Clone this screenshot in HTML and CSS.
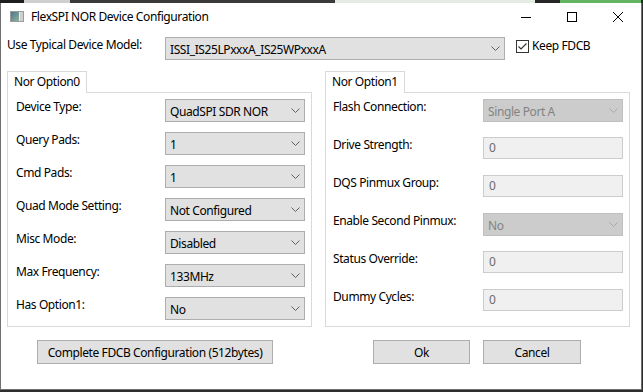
FILE: index.html
```html
<!DOCTYPE html>
<html>
<head>
<meta charset="utf-8">
<link rel="stylesheet" href="styles.css">
</head>
<body>
<div class="desk-strip"></div>
<div class="window">
  <div class="titlebar">
    <svg class="app-icon" width="14" height="11" viewBox="0 0 14 11">
      <defs>
        <linearGradient id="ig" x1="0" y1="0" x2="1" y2="1">
          <stop offset="0" stop-color="#4f7590"/>
          <stop offset="1" stop-color="#8cb39a"/>
        </linearGradient>
      </defs>
      <rect x="0.5" y="0.5" width="13" height="10" fill="#eeeeee" stroke="#9c9c9c"/>
      <rect x="1" y="1" width="8" height="9" fill="url(#ig)"/>
      <rect x="10" y="1" width="3" height="9" fill="#cfcfcf"/>
    </svg>
    <span class="title">FlexSPI NOR Device Configuration</span>
    <div class="cap-btn">
      <svg width="10" height="10" viewBox="0 0 10 10"><path d="M0 5.5H10" stroke="#000" stroke-width="1"/></svg>
    </div>
    <div class="cap-btn">
      <svg width="10" height="10" viewBox="0 0 10 10"><rect x="0.5" y="0.5" width="9" height="9" fill="none" stroke="#000"/></svg>
    </div>
    <div class="cap-btn">
      <svg width="10" height="10" viewBox="0 0 10 10"><path d="M0 0L10 10M10 0L0 10" stroke="#000" stroke-width="1"/></svg>
    </div>
  </div>

  <div class="client">
    <div class="model-row">
      <span class="model-label">Use Typical Device Model:</span>
      <div class="combo wide"><span class="combo-text">ISSI_IS25LPxxxA_IS25WPxxxA</span><svg class="chev" width="9" height="5" viewBox="0 0 9 5"><path d="M0.5 0.5L4.5 4.5L8.5 0.5" fill="none" stroke="#606060"/></svg></div>
      <label class="keep">
        <svg width="13" height="13" viewBox="0 0 13 13"><rect x="0.5" y="0.5" width="12" height="12" fill="#fff" stroke="#333"/><path d="M2.5 6.5L5 9L10.5 3.5" fill="none" stroke="#333" stroke-width="1.2"/></svg>
        <span>Keep FDCB</span>
      </label>
    </div>

    <div class="groups">
      <div class="tabgroup">
        <div class="tab">Nor Option0</div>
        <div class="pane pane-left">
          <div class="row"><span class="lbl">Device Type:</span><div class="combo"><span class="combo-text">QuadSPI SDR NOR</span><svg class="chev" width="9" height="5" viewBox="0 0 9 5"><path d="M0.5 0.5L4.5 4.5L8.5 0.5" fill="none" stroke="#606060"/></svg></div></div>
          <div class="row"><span class="lbl">Query Pads:</span><div class="combo"><span class="combo-text">1</span><svg class="chev" width="9" height="5" viewBox="0 0 9 5"><path d="M0.5 0.5L4.5 4.5L8.5 0.5" fill="none" stroke="#606060"/></svg></div></div>
          <div class="row"><span class="lbl">Cmd Pads:</span><div class="combo"><span class="combo-text">1</span><svg class="chev" width="9" height="5" viewBox="0 0 9 5"><path d="M0.5 0.5L4.5 4.5L8.5 0.5" fill="none" stroke="#606060"/></svg></div></div>
          <div class="row"><span class="lbl">Quad Mode Setting:</span><div class="combo"><span class="combo-text">Not Configured</span><svg class="chev" width="9" height="5" viewBox="0 0 9 5"><path d="M0.5 0.5L4.5 4.5L8.5 0.5" fill="none" stroke="#606060"/></svg></div></div>
          <div class="row"><span class="lbl">Misc Mode:</span><div class="combo"><span class="combo-text">Disabled</span><svg class="chev" width="9" height="5" viewBox="0 0 9 5"><path d="M0.5 0.5L4.5 4.5L8.5 0.5" fill="none" stroke="#606060"/></svg></div></div>
          <div class="row"><span class="lbl">Max Frequency:</span><div class="combo"><span class="combo-text">133MHz</span><svg class="chev" width="9" height="5" viewBox="0 0 9 5"><path d="M0.5 0.5L4.5 4.5L8.5 0.5" fill="none" stroke="#606060"/></svg></div></div>
          <div class="row"><span class="lbl">Has Option1:</span><div class="combo"><span class="combo-text">No</span><svg class="chev" width="9" height="5" viewBox="0 0 9 5"><path d="M0.5 0.5L4.5 4.5L8.5 0.5" fill="none" stroke="#606060"/></svg></div></div>
        </div>
      </div>

      <div class="tabgroup">
        <div class="tab">Nor Option1</div>
        <div class="pane pane-right">
          <div class="row"><span class="lbl">Flash Connection:</span><div class="combo disabled"><span class="combo-text">Single Port A</span><svg class="chev" width="9" height="5" viewBox="0 0 9 5"><path d="M0.5 0.5L4.5 4.5L8.5 0.5" fill="none" stroke="#a8a8a8"/></svg></div></div>
          <div class="row"><span class="lbl">Drive Strength:</span><div class="textbox">0</div></div>
          <div class="row"><span class="lbl">DQS Pinmux Group:</span><div class="textbox">0</div></div>
          <div class="row"><span class="lbl">Enable Second Pinmux:</span><div class="combo disabled"><span class="combo-text">No</span><svg class="chev" width="9" height="5" viewBox="0 0 9 5"><path d="M0.5 0.5L4.5 4.5L8.5 0.5" fill="none" stroke="#a8a8a8"/></svg></div></div>
          <div class="row"><span class="lbl">Status Override:</span><div class="textbox">0</div></div>
          <div class="row"><span class="lbl">Dummy Cycles:</span><div class="textbox">0</div></div>
        </div>
      </div>
    </div>

    <div class="buttons">
      <button class="btn btn-complete">Complete FDCB Configuration (512bytes)</button>
      <button class="btn btn-ok">Ok</button>
      <button class="btn btn-cancel">Cancel</button>
    </div>
  </div>
</div>
</body>
</html>
```

FILE: styles.css
```css
* { box-sizing: border-box; }
html, body { margin: 0; padding: 0; }
body {
  width: 643px;
  height: 392px;
  overflow: hidden;
  background: #2e2e2e;
  font-family: "Noto Sans", "Open Sans", sans-serif;
  font-size: 12px;
  letter-spacing: -0.4px;
  color: #000;
}
.desk-strip {
  height: 3px;
  background: linear-gradient(to right, #1e1e1e 0 24px, #cfcfcf 24px 70px, #3a3a3a 70px 335px, #e4ece4 335px 535px, #262626 535px 560px, #63b463 560px 641px, #262626 641px);
}
.window {
  width: 642px;
  height: 387px;
  background: #fff;
  border: 1px solid #6f6f6f;
  border-top: 0;
  display: flex;
  flex-direction: column;
}
.titlebar {
  height: 27px;
  display: flex;
  align-items: center;
  padding-left: 9px;
}
.app-icon { flex: none; }
.title {
  flex: 1;
  margin-left: 7px;
  line-height: 16px;
  padding-top: 1px;
}
.cap-btn {
  width: 46px;
  height: 27px;
  display: flex;
  align-items: center;
  justify-content: center;
}
.client {
  padding: 7px 0 0 6px;
}
.model-row {
  display: flex;
  align-items: flex-start;
  height: 23px;
}
.model-label {
  width: 158px;
  line-height: 16px;
}
.combo {
  width: 140px;
  height: 23px;
  background: #e1e1e1;
  border: 1px solid #adadad;
  display: flex;
  align-items: center;
  padding: 2px 4px 0 4px;
  flex: none;
}
.combo.wide { width: 340px; }
.combo-text {
  flex: 1;
  white-space: nowrap;
  overflow: hidden;
}
.chev { flex: none; margin-top: -2px; }
.combo.disabled {
  background: #cccccc;
  border-color: #bfbfbf;
  color: #838383;
}
.keep {
  margin-left: 11px;
  margin-top: 2px;
  display: flex;
  align-items: center;
  gap: 3px;
  line-height: 14px;
}
.groups {
  margin-top: 11px;
  display: flex;
  gap: 13px;
  align-items: stretch;
}
.tabgroup {
  width: 305px;
  display: flex;
  flex-direction: column;
}
.tab {
  align-self: flex-start;
  height: 22px;
  padding: 0 6px;
  border: 1px solid #d9d9d9;
  border-bottom: 0;
  background: #fff;
  line-height: 20px;
  position: relative;
  z-index: 1;
  margin-bottom: -1px;
}
.pane {
  flex: 1;
  border: 1px solid #d9d9d9;
  display: flex;
  flex-direction: column;
}
.pane-left {
  padding: 6px 6px 6px 8px;
  gap: 10px;
}
.pane-right {
  padding: 6px 6px 6px 7px;
  gap: 15px;
}
.row {
  display: flex;
  align-items: flex-start;
  height: 23px;
}
.lbl {
  line-height: 16px;
  white-space: nowrap;
}
.pane-left .lbl { width: 149px; }
.pane-right .lbl { width: 150px; }
.textbox {
  width: 140px;
  height: 22px;
  background: #f0f0f0;
  border: 1px solid #cccccc;
  color: #6d6d6d;
  padding: 0 5px;
  line-height: 20px;
}
.buttons {
  margin-top: 13px;
  display: flex;
  padding-left: 30px;
}
.btn {
  height: 24px;
  background: #e1e1e1;
  border: 1px solid #adadad;
  font-family: inherit;
  font-size: 12px;
  letter-spacing: inherit;
  color: #000;
  padding: 0;
}
.btn-complete { width: 236px; }
.btn-ok { width: 97px; margin-left: 100px; }
.btn-cancel { width: 98px; margin-left: 13px; }
```
